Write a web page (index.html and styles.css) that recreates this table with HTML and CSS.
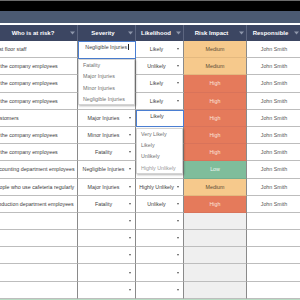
FILE: index.html
```html
<!DOCTYPE html>
<html>
<head>
<meta charset="utf-8">
<link rel="stylesheet" href="styles.css">
</head>
<body>
<div class="top"></div>
<div class="band"></div>
<div class="sheet">
  <div class="th first"><span>Who is at risk?</span><svg class="flt" viewBox="0 0 5 4"><polygon points="0,0.5 5,0.5 2.5,3.5"/></svg></div>
  <div class="th"><span>Severity</span><svg class="flt" viewBox="0 0 5 4"><polygon points="0,0.5 5,0.5 2.5,3.5"/></svg></div>
  <div class="th"><span>Likelihood</span><svg class="flt" viewBox="0 0 5 4"><polygon points="0,0.5 5,0.5 2.5,3.5"/></svg></div>
  <div class="th"><span>Risk Impact</span><svg class="flt" viewBox="0 0 5 4"><polygon points="0,0.5 5,0.5 2.5,3.5"/></svg></div>
  <div class="th"><span>Responsible</span><svg class="flt" viewBox="0 0 5 4"><polygon points="0,0.5 5,0.5 2.5,3.5"/></svg></div>

  <div class="td who">First floor staff</div>
  <div class="td dd edit-host">
    <span></span><i class="arr"></i>
    <div class="editor"><span class="caret">Negligible Injuries</span></div>
    <ul class="list">
      <li>Fatality</li><li>Major Injuries</li><li>Minor Injuries</li><li>Negligible Injuries</li>
    </ul>
  </div>
  <div class="td dd"><span>Likely</span><i class="arr"></i></div>
  <div class="td risk medium">Medium</div>
  <div class="td resp">John Smith</div>

  <div class="td who">All the company employees</div>
  <div class="td dd"><span></span></div>
  <div class="td dd"><span>Unlikely</span><i class="arr"></i></div>
  <div class="td risk medium">Medium</div>
  <div class="td resp">John Smith</div>

  <div class="td who">All the company employees</div>
  <div class="td dd"><span></span></div>
  <div class="td dd"><span>Likely</span><i class="arr"></i></div>
  <div class="td risk high">High</div>
  <div class="td resp">John Smith</div>

  <div class="td who">All the company employees</div>
  <div class="td dd"><span></span></div>
  <div class="td dd"><span>Likely</span><i class="arr"></i></div>
  <div class="td risk high">High</div>
  <div class="td resp">John Smith</div>

  <div class="td who">Customers</div>
  <div class="td dd"><span>Major Injuries</span><i class="arr"></i></div>
  <div class="td dd edit-host">
    <span></span><i class="arr"></i>
    <div class="editor small"><span>Likely</span></div>
    <ul class="list">
      <li>Very Likely</li><li>Likely</li><li>Unlikely</li><li class="faint">Highly Unlikely</li>
    </ul>
  </div>
  <div class="td risk high">High</div>
  <div class="td resp">John Smith</div>

  <div class="td who">All the company employees</div>
  <div class="td dd"><span>Minor Injuries</span><i class="arr"></i></div>
  <div class="td dd"><span></span></div>
  <div class="td risk high">High</div>
  <div class="td resp">John Smith</div>

  <div class="td who">All the company employees</div>
  <div class="td dd"><span>Fatality</span><i class="arr"></i></div>
  <div class="td dd"><span></span></div>
  <div class="td risk high">High</div>
  <div class="td resp">John Smith</div>

  <div class="td who">Accounting department employees</div>
  <div class="td dd"><span>Negligible Injuries</span><i class="arr"></i></div>
  <div class="td dd"><span></span></div>
  <div class="td risk low">Low</div>
  <div class="td resp">John Smith</div>

  <div class="td who">People who use cafeteria regularly</div>
  <div class="td dd"><span>Major Injuries</span><i class="arr"></i></div>
  <div class="td dd"><span>Highly Unlikely</span><i class="arr"></i></div>
  <div class="td risk medium">Medium</div>
  <div class="td resp">John Smith</div>

  <div class="td who">Production department employees</div>
  <div class="td dd"><span>Fatality</span><i class="arr"></i></div>
  <div class="td dd"><span>Unlikely</span><i class="arr"></i></div>
  <div class="td risk high">High</div>
  <div class="td resp">John Smith</div>

  <div class="td who"></div><div class="td dd"><span></span><i class="arr"></i></div><div class="td dd"><span></span><i class="arr"></i></div><div class="td risk empty"></div><div class="td resp"></div>
  <div class="td who"></div><div class="td dd"><span></span><i class="arr"></i></div><div class="td dd"><span></span><i class="arr"></i></div><div class="td risk empty"></div><div class="td resp"></div>
  <div class="td who"></div><div class="td dd"><span></span><i class="arr"></i></div><div class="td dd"><span></span><i class="arr"></i></div><div class="td risk empty"></div><div class="td resp"></div>
  <div class="td who"></div><div class="td dd"><span></span><i class="arr"></i></div><div class="td dd"><span></span><i class="arr"></i></div><div class="td risk empty"></div><div class="td resp"></div>
  <div class="td who"></div><div class="td dd"><span></span><i class="arr"></i></div><div class="td dd"><span></span><i class="arr"></i></div><div class="td risk empty"></div><div class="td resp"></div>
</div>
<div class="foot"></div>
</body>
</html>
```

FILE: styles.css
```css
html, body {
  margin: 0;
  padding: 0;
  background: #ffffff;
}
body {
  width: 300px;
  height: 300px;
  overflow: hidden;
  font-family: "Liberation Sans", Arial, sans-serif;
  font-size: 5.3px;
  color: #404040;
}
.top {
  height: 10px;
  background: #000000;
  border-top: 1px solid #6b6b6b;
}
.band {
  height: 12px;
  background: #4b5a72;
  border-bottom: 2px solid #ffffff;
}
.sheet {
  display: grid;
  grid-template-columns: 87px 58px 48px 63px 55px;
  grid-template-rows: 16px repeat(15, 17.2px);
  margin-left: -9px;
  width: 311px;
}
.th {
  display: flex;
  align-items: center;
  background: #3c4662;
  color: #ffffff;
  font-weight: bold;
  font-size: 6px;
  padding-right: 2px;
  border-right: 1px solid #5d6680;
  box-sizing: border-box;
}
.th.first {
  padding-left: 5px;
}
.th span {
  flex: 1;
  text-align: center;
  white-space: nowrap;
}
.flt {
  width: 5px;
  height: 4px;
  flex: none;
  fill: #8e97ab;
}
.td {
  box-sizing: border-box;
  border-right: 1px solid #8a8a8a;
  border-bottom: 1px solid #bdbdbd;
  display: flex;
  align-items: center;
  white-space: nowrap;
  overflow: visible;
}
.who {
  padding-left: 2px;
  overflow: hidden;
}
.dd {
  padding-right: 4px;
}
.dd span {
  flex: 1;
  text-align: center;
}
.arr {
  flex: none;
  width: 0;
  height: 0;
  border-left: 1.5px solid transparent;
  border-right: 1.5px solid transparent;
  border-top: 2px solid #555555;
}
.risk {
  justify-content: center;
  border-right-color: #8a8a8a;
}
.medium {
  background: #f6c98c;
  color: #5a4a35;
  border-bottom-color: #e4b97f;
}
.high {
  background: #e57a5b;
  color: #fbe3dc;
  border-bottom-color: #d9735a;
}
.low {
  background: #7fbd9b;
  color: #eef7f1;
  border-bottom-color: #74ae8e;
}
.empty {
  background: #efefef;
}
.resp {
  justify-content: center;
  color: #555555;
}
.edit-host {
  position: relative;
}
.editor {
  position: absolute;
  left: 0;
  top: 0;
  width: 58px;
  height: 18px;
  box-sizing: border-box;
  border: 1.5px solid #4a7ed2;
  background: #ffffff;
  text-align: center;
  padding-top: 2px;
  color: #404040;
  z-index: 2;
}
.editor.small {
  width: 48px;
  height: 17px;
  padding-right: 6px;
}
.caret {
  border-right: 0.6px solid #222222;
  padding-right: 0.5px;
}
.list {
  position: absolute;
  left: 0;
  top: 18px;
  width: 100%;
  height: 46px;
  margin: 0;
  padding: 0;
  list-style: none;
  box-sizing: border-box;
  background: #ffffff;
  border: 1px solid #d4d4d4;
  box-shadow: 1px 1px 2px rgba(0, 0, 0, 0.3);
  z-index: 2;
}
.list li {
  height: 11.3px;
  line-height: 11.3px;
  padding-left: 4px;
  color: #707070;
}
.list li.faint {
  color: #9a9a9a;
}
.foot {
  height: 3px;
  background: #b8dcc3;
}
```
